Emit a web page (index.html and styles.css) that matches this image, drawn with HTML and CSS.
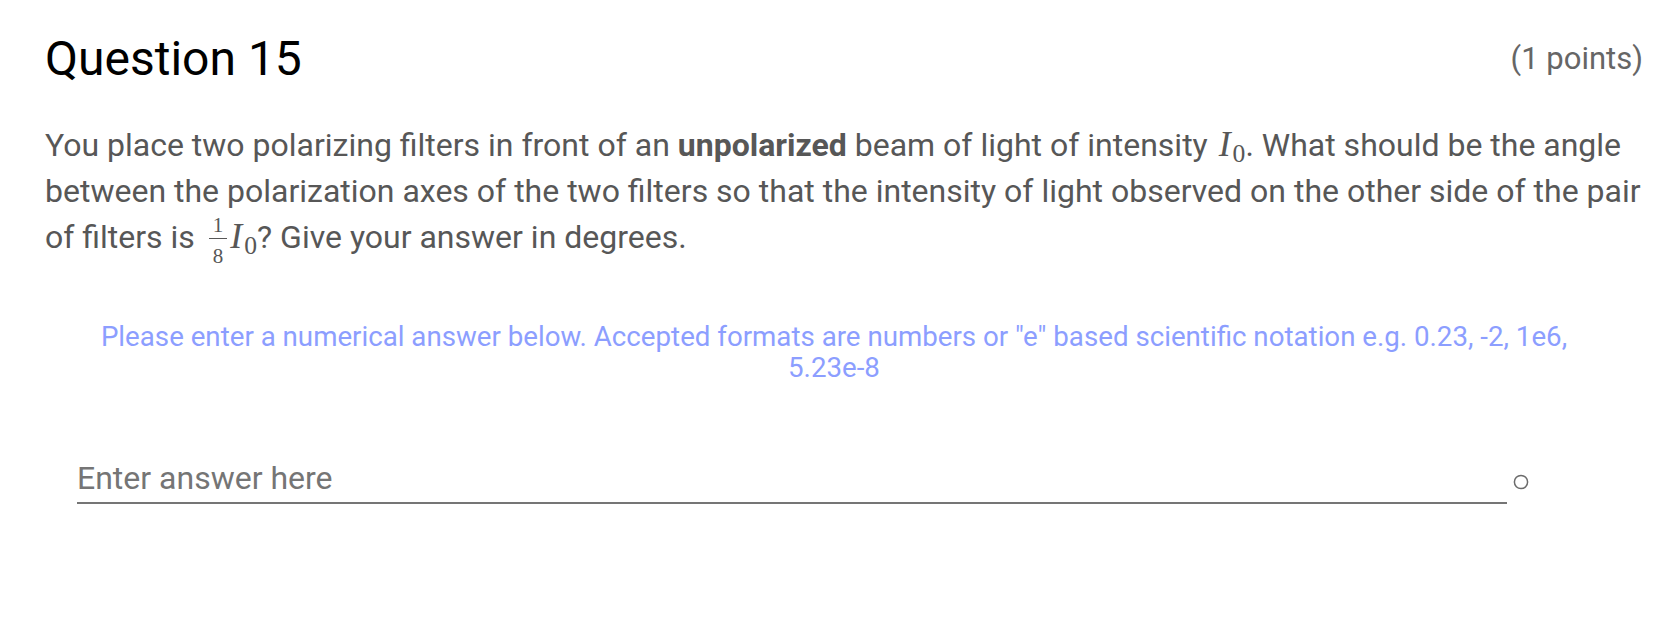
FILE: index.html
```html
<!DOCTYPE html>
<html lang="en">
<head>
<meta charset="utf-8">
<title>Question 15</title>
<link rel="stylesheet" href="styles.css">
</head>
<body>
<main class="question">
  <header class="q-head">
    <h1 class="q-title">Question 15</h1>
    <span class="q-points">(1 points)</span>
  </header>
  <p class="q-text">You place two polarizing filters in front of an <strong>unpolarized</strong> beam of light of intensity <span class="math"><span class="mi">I</span><sub class="msub">0</sub></span>. What should be the angle between the polarization axes of the two filters so that the intensity of light observed on the other side of the pair of filters is <span class="math"><span class="frac"><span class="num">1</span><span class="den">8</span></span><span class="mi">I</span><sub class="msub">0</sub></span>? Give your answer in degrees.</p>
  <p class="q-hint">Please enter a numerical answer below. Accepted formats are numbers or "e" based scientific notation e.g. 0.23, -2, 1e6, 5.23e-8</p>
  <div class="answer-row">
    <input class="answer" type="text" placeholder="Enter answer here">
    <svg class="status" width="16" height="16" viewBox="0 0 16 16" aria-hidden="true"><circle cx="8" cy="8" r="6.6" fill="none" stroke="#6b6b6b" stroke-width="1.5"/></svg>
  </div>
</main>
</body>
</html>
```

FILE: styles.css
```css
html, body {
  margin: 0;
  padding: 0;
  background: #ffffff;
}
body {
  font-family: Roboto, "Liberation Sans", Arial, sans-serif;
}
.question {
  padding: 31px 25px 0 45px;
}
.q-head {
  display: flex;
  justify-content: space-between;
  align-items: center;
}
.q-title {
  margin: 0;
  font-size: 48px;
  line-height: 56px;
  font-weight: 400;
  color: #000;
}
.q-points {
  font-size: 31px;
  line-height: 36px;
  color: #666;
}
.q-text {
  margin: 35px 0 0;
  font-size: 32px;
  line-height: 46px;
  color: #575757;
}
.q-text strong {
  font-weight: 700;
}
.math {
  font-family: "Liberation Serif", "Times New Roman", serif;
  white-space: nowrap;
}
.mi {
  font-style: italic;
  font-size: 1.12em;
  line-height: 0;
  margin-left: 3px;
}
.msub {
  font-size: 0.8em;
  line-height: 0;
  vertical-align: -0.24em;
  margin-left: 2px;
}
.frac {
  display: inline-block;
  vertical-align: -15px;
  font-size: 21px;
  text-align: center;
  margin: 0 0 0 6px;
}
.num {
  display: block;
  line-height: 15px;
  padding: 0 4px 5px;
  border-bottom: 1px solid #575757;
}
.den {
  display: block;
  line-height: 15px;
  padding-top: 10px;
}
.q-hint {
  margin: 57px 0 0;
  padding: 0 60px 0 40px;
  text-align: center;
  font-size: 27.7px;
  line-height: 31px;
  color: #8c9eff;
}
.answer-row {
  display: flex;
  align-items: center;
  margin: 77px 114px 0 32px;
}
.answer {
  flex: 1;
  min-width: 0;
  box-sizing: content-box;
  height: 36px;
  padding: 0 0 6px;
  border: 0;
  border-bottom: 2px solid #757575;
  outline: none;
  background: transparent;
  font-family: Roboto, "Liberation Sans", Arial, sans-serif;
  font-size: 32px;
  line-height: 36px;
  color: #333;
}
.answer::placeholder {
  color: #757575;
  opacity: 1;
}
.status {
  flex: none;
  margin-left: 6px;
}
```
